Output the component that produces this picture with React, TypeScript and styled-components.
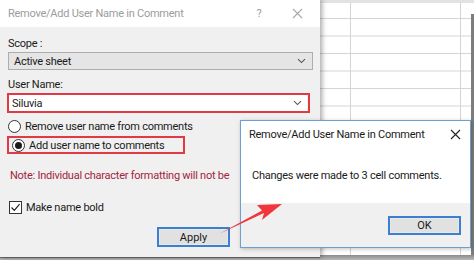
import React from 'react';
import styled, { createGlobalStyle } from 'styled-components';

const GlobalStyle = createGlobalStyle`
  html, body { margin: 0; padding: 0; }
  body {
    font-family: Roboto, "Noto Sans", sans-serif;
    font-size: 11px;
    letter-spacing: -0.25px;
    color: #1a1a1a;
    white-space: nowrap;
  }
`;

// the sheet behind the dialogs is the "desktop" everything floats on
const Sheet = styled.div`
  position: relative;
  width: 474px;
  height: 260px;
  overflow: hidden;
  background-color: #fff;
  background-image:
    linear-gradient(to right, #d4d4d4 1px, transparent 1px),
    linear-gradient(to bottom, #d4d4d4 1px, transparent 1px);
  background-size: 55px 17.5px;
  background-position: 350px 0.5px;

  &::before {
    content: '';
    position: absolute;
    left: 0; right: 0; top: 0;
    height: 3px;
    background: #e2e2e2;
  }
  &::after {
    content: '';
    position: absolute;
    left: 0; right: 0; bottom: 0;
    height: 5px;
    background: linear-gradient(#8a8a8a, #b8b8b8);
  }
`;

const SheetEdge = styled.div`
  position: absolute;
  right: 0;
  top: 14px;
  bottom: 0;
  width: 3px;
  background: #7d7d7d;
`;

const Window = styled.div`
  position: absolute;
  display: flex;
  flex-direction: column;
  box-sizing: border-box;
  background: #f0f0f0;
  z-index: 2;
`;

const MainWindow = styled(Window)`
  left: 0;
  top: 0;
  width: 320px;
  height: 257px;
  box-shadow: 2px 0 5px rgba(0, 0, 0, 0.35), 0 1px 0 #6b6b6b;
`;

const PopupWindow = styled(Window)`
  left: 240px;
  top: 120px;
  width: 231px;
  height: 128px;
  border: 1px solid #6e9fd3;
  box-shadow: 1px 1px 4px rgba(0, 0, 0, 0.25);
  z-index: 3;
`;

const TitleBar = styled.div<{ $inactive?: boolean }>`
  display: flex;
  align-items: center;
  height: 27px;
  flex-shrink: 0;
  padding-left: 8px;
  background: #fff;
  color: ${p => (p.$inactive ? '#9c9c9c' : '#1a1a1a')};
`;

const TitleText = styled.span`
  flex: 1;
`;

const TitleButton = styled.span<{ $w: number; $color?: string }>`
  width: ${p => p.$w}px;
  display: flex;
  justify-content: center;
  align-items: center;
  color: ${p => p.$color || '#9c9c9c'};
`;

const Body = styled.div`
  display: flex;
  flex-direction: column;
  padding: 0 7px 0 8px;
  flex: 1;
`;

const Label = styled.div<{ $top: number }>`
  margin-top: ${p => p.$top}px;
  height: 17px;
  line-height: 17px;
`;

const Combo = styled.div`
  display: flex;
  align-items: center;
  justify-content: space-between;
  box-sizing: border-box;
  height: 18px;
  padding: 0 6px 0 5px;
  border: 1px solid #adadad;
  background: #e5e5e5;
`;

const Highlight = styled.div<{ $width?: number; $top: number }>`
  box-sizing: border-box;
  width: ${p => (p.$width ? `${p.$width}px` : 'auto')};
  margin-top: ${p => p.$top}px;
  margin-left: -1px;
  border: 2px solid #e23a44;
`;

const TextCombo = styled(Combo)`
  height: 16px;
  border: none;
  background: #fff;
  padding: 0 5px 0 3px;
  margin-right: 1px;
`;

const OptionRow = styled.label<{ $top?: number }>`
  display: flex;
  align-items: center;
  gap: 4px;
  height: 17px;
  margin-top: ${p => p.$top || 0}px;
`;

const Radio = styled.span<{ $checked?: boolean }>`
  box-sizing: border-box;
  width: 13px;
  height: 13px;
  border-radius: 50%;
  border: 1px solid #333;
  background: #fff;
  display: flex;
  align-items: center;
  justify-content: center;
  &::after {
    content: '';
    width: 7px;
    height: 7px;
    border-radius: 50%;
    background: ${p => (p.$checked ? '#1a1a1a' : 'transparent')};
  }
`;

const Check = styled.span`
  box-sizing: border-box;
  width: 13px;
  height: 13px;
  border: 1px solid #333;
  background: #fff;
  display: flex;
  align-items: center;
  justify-content: center;
`;

// the popup covers the end of this line in the screenshot
const Note = styled.div`
  margin-top: 13px;
  margin-left: 2px;
  height: 17px;
  line-height: 17px;
  color: #a3243f;
`;

const Footer = styled.div<{ $pad: string }>`
  display: flex;
  justify-content: flex-end;
  padding: ${p => p.$pad};
`;

const Button = styled.button`
  box-sizing: border-box;
  width: 73px;
  height: 20px;
  padding: 0;
  border: 2px solid #3c7fd1;
  background: #e1e1e1;
  font: inherit;
  color: #1a1a1a;
  box-shadow: inset 0 0 0 1px #e9e9e9;
`;

const Message = styled.div`
  flex: 1;
  background: #fff;
  padding: 22px 0 0 11px;
`;

const PopupFooter = styled.div`
  height: 44px;
  display: flex;
  justify-content: flex-end;
  align-items: flex-start;
  padding: 13px 9px 0 0;
  box-sizing: border-box;
`;

const ArrowLayer = styled.svg`
  position: absolute;
  left: 0;
  top: 0;
  z-index: 4;
  pointer-events: none;
`;

const Chevron = () => (
  <svg width="9" height="6" viewBox="0 0 9 6">
    <path d="M1 1.2 L4.5 4.6 L8 1.2" fill="none" stroke="#555" strokeWidth="1.1" />
  </svg>
);

const Cross = ({ color }: { color: string }) => (
  <svg width="11" height="11" viewBox="0 0 11 11">
    <path d="M1 1 L10 10 M10 1 L1 10" stroke={color} strokeWidth="1.1" />
  </svg>
);

export default function App() {
  return (
    <>
      <GlobalStyle />
      <Sheet>
        <SheetEdge />
        <MainWindow>
          <TitleBar $inactive>
            <TitleText>Remove/Add User Name in Comment</TitleText>
            <TitleButton $w={30}>?</TitleButton>
            <TitleButton $w={46}>
              <Cross color="#a8a8a8" />
            </TitleButton>
          </TitleBar>
          <Body>
            <Label $top={8}>Scope :</Label>
            <Combo>
              <span>Active sheet</span>
              <Chevron />
            </Combo>
            <Label $top={6}>User Name:</Label>
            <Highlight $top={0} style={{ marginRight: 3 }}>
              <TextCombo>
                <span>Siluvia</span>
                <Chevron />
              </TextCombo>
            </Highlight>
            <OptionRow $top={5}>
              <Radio />
              <span>Remove user name from comments</span>
            </OptionRow>
            <Highlight $width={178} $top={1}>
              <OptionRow style={{ height: 14, paddingLeft: 3 }}>
                <Radio $checked />
                <span>Add user name to comments</span>
              </OptionRow>
            </Highlight>
            <Note>Note: Individual character formatting will not be</Note>
            <OptionRow $top={15} style={{ paddingLeft: 1 }}>
              <Check>
                <svg width="11" height="11" viewBox="0 0 11 11">
                  <path d="M1.5 5.5 L4.3 8.4 L9.6 2.2" fill="none" stroke="#222" strokeWidth="1.2" />
                </svg>
              </Check>
              <span>Make name bold</span>
            </OptionRow>
          </Body>
          <Footer $pad="0 90px 10px 0">
            <Button>Apply</Button>
          </Footer>
        </MainWindow>

        <PopupWindow>
          <TitleBar style={{ height: 26 }}>
            <TitleText>Remove/Add User Name in Comment</TitleText>
            <TitleButton $w={30} $color="#1a1a1a">
              <Cross color="#222" />
            </TitleButton>
          </TitleBar>
          <Message>Changes were made to 3 cell comments.</Message>
          <PopupFooter>
            <Button style={{ height: 19 }}>OK</Button>
          </PopupFooter>
        </PopupWindow>

        <ArrowLayer width="474" height="260">
          <polygon points="220,233.5 264,213 262,220 282,204 257,205 262,210.5" fill="#f0353c" />
        </ArrowLayer>
      </Sheet>
    </>
  );
}
